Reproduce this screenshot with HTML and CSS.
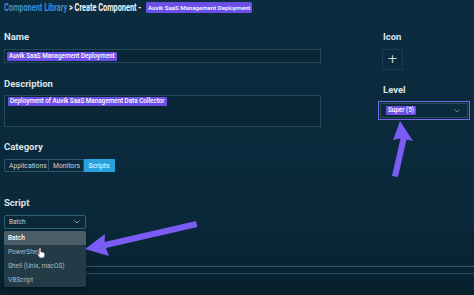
FILE: index.html
```html
<!DOCTYPE html>
<html lang="en">
<head>
    <meta charset="UTF-8">
    <meta name="viewport" content="width=device-width, initial-scale=1.0">
    <title>Create Component</title>
    <link rel="stylesheet" href="styles.css">
</head>
<body>
    <div class="page">
        <div class="crumbs">
            <span class="crumb-text"><span class="crumb-link">Component Library</span> <span class="crumb-current">&gt; Create Component -</span></span>
            <span class="mark mark-title">Auvik SaaS Management Deployment</span>
        </div>

        <div class="form">
            <div class="main-col">
                <div class="label">Name</div>
                <div class="input">
                    <span class="mark">Auvik SaaS Management Deployment</span>
                </div>

                <div class="label">Description</div>
                <div class="textarea">
                    <span class="mark">Deployment of Auvik SaaS Management Data Collector</span>
                </div>

                <div class="label">Category</div>
                <div class="segmented">
                    <button class="seg">Applications</button>
                    <button class="seg">Monitors</button>
                    <button class="seg seg-active">Scripts</button>
                </div>
            </div>

            <div class="side-col">
                <div class="label">Icon</div>
                <div class="icon-box">+</div>

                <div class="label">Level</div>
                <div class="level-select">
                    <div class="select-inner">
                        <span class="mark">Super (5)</span>
                        <svg class="chevron" width="6" height="4" viewBox="0 0 6 4"><polyline points="0.5,0.5 3,3 5.5,0.5" fill="none" stroke="#7f9aa6" stroke-width="0.8"/></svg>
                    </div>
                </div>
            </div>
        </div>

        <div class="script">
            <div class="label">Script</div>
            <div class="select-wrap">
                <div class="select">
                    <span>Batch</span>
                    <svg class="chevron" width="6" height="4" viewBox="0 0 6 4"><polyline points="0.5,0.5 3,3 5.5,0.5" fill="none" stroke="#9fb4be" stroke-width="0.8"/></svg>
                </div>
                <div class="dropdown">
                    <div class="option option-active">Batch</div>
                    <div class="option">PowerShell</div>
                    <div class="option">Shell (Unix, macOS)</div>
                    <div class="option">VBScript</div>
                    <svg class="hand" width="9" height="11" viewBox="0 0 9 11">
                        <path d="M3 0.8c0.6 0 0.9 0.4 0.9 1v3.1l0.3-0.1c0.5-0.2 1 0 1.2 0.4c0.5-0.2 1 0 1.2 0.5c0.6-0.1 1.1 0.3 1.1 0.9v2c0 1.3-1 2.3-2.3 2.3h-1.6c-0.8 0-1.4-0.4-1.8-1l-1.5-2.3c-0.3-0.5 0-1 0.5-1c0.3 0 0.6 0.2 0.8 0.4l0.3 0.4v-5.6c0-0.6 0.3-1 0.9-1z" fill="#ffffff" stroke="#222" stroke-width="0.5"/>
                    </svg>
                </div>
            </div>
            <div class="editor">
                <div class="editor-inner"></div>
            </div>
        </div>

        <svg class="arrow arrow-level" width="30" height="66" viewBox="0 0 30 66">
            <path d="M11 0 L24 20 L17.5 18.5 L9 56 L3 55 L11.5 17.5 L4 19 Z" fill="#7a5cf4"/>
        </svg>
        <svg class="arrow arrow-script" width="118" height="46" viewBox="0 0 118 46">
            <path d="M1 28 L21 13 L20.5 21 L112 0 L113.5 6 L22 27 L25 35 Z" fill="#7a5cf4"/>
        </svg>
    </div>
</body>
</html>
```

FILE: styles.css
```css
* {
    margin: 0;
    padding: 0;
    box-sizing: border-box;
}

body {
    font-family: 'Roboto', 'Liberation Sans', sans-serif;
    background: #0a2a3c;
    overflow: hidden;
}

.page {
    position: relative;
    height: 295px;
    overflow: hidden;
    background: linear-gradient(180deg, #0b2b3e 0%, #0a2a3c 70%, #07202e 100%);
}

/* Breadcrumb header */
.crumbs {
    height: 15px;
    padding: 0 4px;
    display: flex;
    align-items: center;
    gap: 3px;
    white-space: nowrap;
}

/* narrow the title so it reads like the condensed face of the app */
.crumb-text {
    display: inline-block;
    font-family: 'Roboto', sans-serif;
    font-weight: 700;
    font-size: 10.5px;
    transform: scaleX(0.7);
    transform-origin: left center;
    margin-right: -57px;
}

.crumb-link {
    color: #3b8ed2;
}

.crumb-current {
    color: #f2f5f7;
}

.mark {
    display: inline-block;
    background: #6b4fe6;
    color: #ffffff;
    font-family: 'Roboto', sans-serif;
    font-weight: 500;
    font-size: 6.3px;
    line-height: 9px;
    padding: 0 2px;
    border-radius: 1px;
    white-space: nowrap;
}

.mark-title {
    font-size: 6.1px;
    line-height: 11px;
    padding: 0 2px;
}

/* Form layout */
.form {
    display: flex;
    padding: 0 4px;
}

.main-col {
    width: 318px;
    padding-top: 16px;
}

.side-col {
    width: 87px;
    margin-left: 62px;
    padding-top: 16px;
}

.label {
    font-family: 'Roboto', sans-serif;
    font-weight: 700;
    font-size: 9.5px;
    line-height: 12px;
    color: #dbe3e7;
    margin-bottom: 6px;
}

.input {
    height: 14px;
    border: 1px solid #24495a;
    background: #0a2737;
    padding: 1px 2px;
    display: flex;
    align-items: center;
    margin-bottom: 15px;
}

.textarea {
    height: 32px;
    border: 1px solid #24495a;
    background: #0a2737;
    padding: 1px 3px;
    margin-top: -1px;
    margin-bottom: 14px;
    display: flex;
    align-items: flex-start;
}

.segmented {
    display: flex;
    height: 13px;
}

.seg {
    font-family: 'Roboto', sans-serif;
    font-size: 6.8px;
    color: #c9d4d9;
    background: transparent;
    border: 1px solid #2a5566;
    padding: 0 4px;
    height: 13px;
}

.seg + .seg {
    border-left: none;
}

.seg:first-child {
    width: 45px;
    border-radius: 1px 0 0 1px;
}

.seg:nth-child(2) {
    width: 35px;
}

.seg-active {
    width: 31px;
    background: #29a1dc;
    border-color: #29a1dc;
    color: #ffffff;
    border-radius: 0 1px 1px 0;
}

.icon-box {
    width: 21px;
    height: 21px;
    border: 1px solid #1d3d4d;
    color: #c9d6dc;
    font-family: 'DejaVu Sans', sans-serif;
    font-size: 13px;
    line-height: 18px;
    text-align: center;
    margin-top: 1px;
    margin-left: -1px;
    margin-bottom: 14px;
}

.level-select {
    width: 92px;
    height: 19px;
    margin-left: -5px;
    margin-top: -1px;
    border: 1px solid #7a64f0;
    padding: 1px;
}

.select-inner {
    height: 15px;
    border: 1px solid #264f4f;
    display: flex;
    align-items: center;
    justify-content: space-between;
    padding: 0 7px 0 5px;
}

/* Script section */
.script {
    padding: 25px 0 0 4px;
}

.select-wrap {
    position: relative;
    width: 82px;
}

.select {
    height: 14px;
    border: 1px solid #2e6174;
    border-radius: 2px;
    display: flex;
    align-items: center;
    justify-content: space-between;
    padding: 0 5px 0 4px;
    font-size: 6.5px;
    color: #c3ced4;
}

.dropdown {
    position: absolute;
    top: 16px;
    left: 0;
    width: 82px;
    background: #233a47;
    border-radius: 2px;
    box-shadow: 0 2px 4px rgba(0, 0, 0, 0.3);
    z-index: 2;
}

.option {
    height: 14px;
    line-height: 14px;
    padding: 0 4px;
    font-size: 6.5px;
    color: #a9bbc4;
}

.option-active {
    background: #4b5d67;
    color: #ffffff;
    font-weight: 500;
    border-radius: 2px 2px 0 0;
}

.hand {
    position: absolute;
    left: 33px;
    top: 16px;
}

.editor {
    margin-top: 37px;
    border-top: 1px solid #2f5665;
    padding-top: 6px;
}

.editor-inner {
    border-top: 1px solid #244a59;
    height: 20px;
}

/* Annotation arrows */
.arrow {
    position: absolute;
    z-index: 3;
}

.arrow-level {
    left: 389px;
    top: 121px;
}

.arrow-script {
    left: 84px;
    top: 221px;
}
```
